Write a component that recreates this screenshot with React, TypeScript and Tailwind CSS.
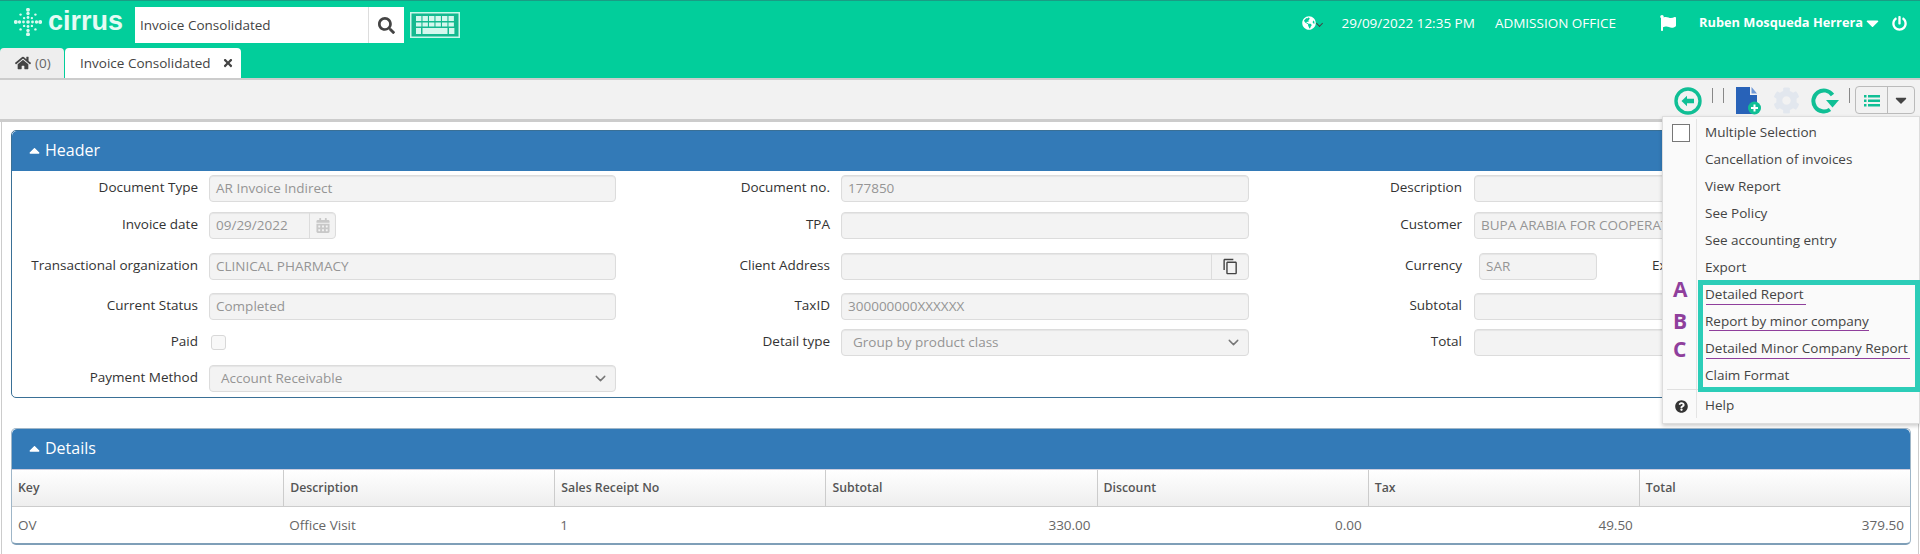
import React from 'react';
import {
  FaCalendarAlt, FaCaretDown, FaCaretUp, FaCog, FaFlag, FaGlobeAmericas, FaHome,
  FaPowerOff, FaQuestionCircle, FaSearch, FaTimes,
} from 'react-icons/fa';
import { LuChevronDown } from 'react-icons/lu';
import { MdContentCopy } from 'react-icons/md';

const inputBox = 'h-[27px] rounded-[4px] border border-[#dcdcdc] bg-[#f3f3f3] shadow-[inset_0_1px_1px_rgba(0,0,0,0.06)] text-[#959595] flex items-center';

function CirrusLogo() {
  const dots: { x: number; y: number; r: number }[] = [{ x: 14, y: 14, r: 1.8 }];
  for (let a = 0; a < 8; a++) {
    const angle = (a * Math.PI) / 4;
    const straight = a % 2 === 0;
    const radii = straight ? [4.5, 8.5, 12.2] : [5.5, 10.5];
    radii.forEach((rad, i) => {
      dots.push({
        x: 14 + rad * Math.sin(angle),
        y: 14 - rad * Math.cos(angle),
        r: straight ? 1.4 + i * 0.3 : 1.2,
      });
    });
  }
  return (
    <svg width="28" height="28" viewBox="0 0 28 28" className="shrink-0">
      {dots.map((d, i) => (
        <circle key={i} cx={d.x} cy={d.y} r={d.r} fill="#d9faf0" />
      ))}
    </svg>
  );
}

function KeyboardIcon() {
  const keys = [0, 1, 2, 3, 4, 5];
  return (
    <svg width="50" height="26" viewBox="0 0 50 26" className="ml-[6px]">
      <rect x="0.75" y="0.75" width="48.5" height="24.5" fill="#14b98f" stroke="#c9f7ea" strokeWidth="1.5" />
      {keys.map((k) => <rect key={`a${k}`} x={6 + k * 6.5} y="4" width="5.4" height="5" fill="#d4f8ee" />)}
      {keys.map((k) => <rect key={`b${k}`} x={6 + k * 6.5} y="10.5" width="5.4" height="4" fill="#d4f8ee" />)}
      <rect x="6" y="16" width="5" height="6" fill="#d4f8ee" />
      <rect x="12.5" y="16" width="25" height="6" fill="#d4f8ee" />
      <rect x="39" y="16" width="5.4" height="6" fill="#d4f8ee" />
    </svg>
  );
}

function BackIcon() {
  return (
    <svg width="28" height="28" viewBox="0 0 28 28">
      <circle cx="14" cy="14" r="12" fill="none" stroke="#10bf95" strokeWidth="3.4" />
      <path d="M7.5 14 L13 8.8 V11.8 H20 V16.2 H13 V19.2 Z" fill="#10bf95" />
    </svg>
  );
}

function NewDocIcon() {
  return (
    <svg width="26" height="28" viewBox="0 0 26 28">
      <path d="M0 0 H14 V8 H21 V27 H0 Z" fill="#2862b8" />
      <path d="M15.5 0 L21 6.5 H15.5 Z" fill="#6f98d6" />
      <circle cx="18.5" cy="21" r="6.5" fill="#10bf95" />
      <path d="M18.5 17.5 V24.5 M15 21 H22" stroke="#ffffff" strokeWidth="2" />
    </svg>
  );
}

function RefreshIcon() {
  return (
    <svg width="28" height="27" viewBox="0 0 28 27">
      <path d="M19 22.5 A10.5 10.5 0 1 1 21.5 8" fill="none" stroke="#10bf95" strokeWidth="4" />
      <path d="M15 13 H28 L21.5 20.5 Z" fill="#10bf95" />
    </svg>
  );
}

function ListIcon() {
  return (
    <svg width="16" height="13" viewBox="0 0 16 13">
      {[1, 5.5, 10].map((y) => (
        <g key={y} fill="#10bf95">
          <rect x="0" y={y} width="2.5" height="2.5" />
          <rect x="4" y={y} width="12" height="2.5" />
        </g>
      ))}
    </svg>
  );
}

function Field({ label, labelWidth, children }: { label: string; labelWidth: string; children: React.ReactNode }) {
  return (
    <div className="flex items-center h-[27px]">
      <span className={`${labelWidth} shrink-0 text-right text-[#333] whitespace-nowrap pb-[2px]`}>{label}</span>
      {children}
    </div>
  );
}

function TextInput({ value, className = '' }: { value?: string; className?: string }) {
  return (
    <div className={`${inputBox} px-[6px] overflow-hidden whitespace-nowrap ${className}`}>{value}</div>
  );
}

function SelectInput({ value, className = '' }: { value: string; className?: string }) {
  return (
    <div className={`${inputBox} pl-[11px] pr-[6px] justify-between ${className}`}>
      <span>{value}</span>
      <LuChevronDown className="w-[17px] h-[17px] text-[#777]" />
    </div>
  );
}

function PanelBar({ title }: { title: string }) {
  return (
    <div className="h-[40px] bg-[#337ab7] rounded-t-[5px] flex items-center pl-[17px] pb-[2px] text-white text-[16px]">
      <FaCaretUp className="w-[11px] h-[17px] mr-[5px]" />
      {title}
    </div>
  );
}

const menuItems = [
  'Cancellation of invoices',
  'View Report',
  'See Policy',
  'See accounting entry',
  'Export',
  'Detailed Report',
  'Report by minor company',
  'Detailed Minor Company Report',
  'Claim Format',
];

function ActionsMenu() {
  return (
    <div className="absolute left-[1662px] top-[116px] w-[258px] h-[308px] z-10 border border-[#ddd] bg-[#fafafa] shadow-[0_2px_4px_rgba(0,0,0,0.2)] pt-[2px] text-[#444]">
      <div className="flex h-[27px] items-center">
        <div className="w-[34px] h-full flex items-center justify-center border-r border-[#e4e4e4]">
          <div className="w-[18px] h-[18px] border border-[#777] bg-white ml-[2px]" />
        </div>
        <span className="pl-[8px]">Multiple Selection</span>
      </div>
      {menuItems.map((item) => (
        <div key={item} className="flex h-[27px] items-center">
          <div className="w-[34px] h-full border-r border-[#e4e4e4]" />
          <span className="pl-[8px] whitespace-nowrap">{item}</span>
        </div>
      ))}
      <div className="h-px ml-[4px] bg-[#e0e0e0]" />
      <div className="flex h-[28px] items-center">
        <div className="w-[34px] h-full flex items-center justify-center border-r border-[#e4e4e4]">
          <FaQuestionCircle className="w-[13px] h-[13px] text-[#333] mt-[4px] ml-[3px]" />
        </div>
        <span className="pl-[8px] mt-[2px]">Help</span>
      </div>

      {/* annotations drawn over the menu */}
      <div className="absolute left-[35px] top-[163px] w-[222px] h-[112px] border-[5px] border-[#2ccdb8]" />
      <span className="absolute left-[10px] top-[159px] text-[21px] leading-[27px] font-bold text-[#8f3f9c]">A</span>
      <span className="absolute left-[10px] top-[191px] text-[21px] leading-[27px] font-bold text-[#8f3f9c]">B</span>
      <span className="absolute left-[10px] top-[219px] text-[21px] leading-[27px] font-bold text-[#8f3f9c]">C</span>
      <div className="absolute left-[43px] top-[187px] w-[100px] h-px bg-[#8f3f9c]" />
      <div className="absolute left-[46px] top-[213px] w-[160px] h-px bg-[#8f3f9c]" />
      <div className="absolute left-[43px] top-[241px] w-[204px] h-px bg-[#8f3f9c]" />
    </div>
  );
}

const columns = ['Key', 'Description', 'Sales Receipt No', 'Subtotal', 'Discount', 'Tax', 'Total'];
const row: { text: string; right?: boolean }[] = [
  { text: 'OV' },
  { text: 'Office Visit' },
  { text: '1' },
  { text: '330.00', right: true },
  { text: '0.00', right: true },
  { text: '49.50', right: true },
  { text: '379.50', right: true },
];

export default function App() {
  return (
    <div className="relative w-[1920px] h-[554px] overflow-hidden bg-white text-[13.5px] font-['Open_Sans',sans-serif]">
      {/* Top bar */}
      <header className="h-[78px] bg-[#02ce9b] border-t border-[#1a9c84] flex flex-col">
        <div className="h-[47px] flex items-start text-white">
          <div className="flex items-center pl-[14px] pt-[7px]">
            <CirrusLogo />
            <span className="ml-[6px] text-[27px] leading-[28px] font-bold font-['Liberation_Sans',sans-serif] text-[#e4fbf4] -mt-[3px]">cirrus</span>
          </div>
          <div className="ml-[12px] mt-[6px] w-[269px] h-[36px] bg-white flex text-[#444]">
            <div className="flex-1 flex items-center pl-[5px]">Invoice Consolidated</div>
            <div className="w-[36px] border-l border-[#ddd] flex items-center justify-center">
              <FaSearch className="w-[17px] h-[17px] text-[#444]" />
            </div>
          </div>
          <div className="mt-[11px]"><KeyboardIcon /></div>
          <div className="ml-auto flex items-center h-[44px] pr-[13px]">
            <span className="relative mr-[26px]">
              <FaGlobeAmericas className="w-[14px] h-[14px]" />
              <span className="absolute left-[15px] top-[5px] w-[5px] h-[5px] border-b border-r border-[#444] rotate-45" />
            </span>
            <span className="mr-[20px]">29/09/2022 12:35 PM</span>
            <span className="mr-[43px]">ADMISSION OFFICE</span>
            <FaFlag className="w-[18px] h-[16px] mr-[22px]" />
            <span className="font-bold text-[12.8px]">Ruben Mosqueda Herrera</span>
            <FaCaretDown className="w-[13px] h-[20px] ml-[3px] mr-[13px]" />
            <FaPowerOff className="w-[15px] h-[15px]" />
          </div>
        </div>
        <div className="h-[30px] flex items-end text-[#444]">
          <div className="w-[64px] h-[30px] rounded-t-[4px] bg-[#eeeeee] flex items-center pl-[15px] gap-[4px]">
            <FaHome className="w-[16px] h-[16px] text-[#444]" />
            <span className="text-[#666]">(0)</span>
          </div>
          <div className="ml-px w-[176px] h-[30px] rounded-t-[4px] bg-white flex items-center pl-[15px]">
            <span>Invoice Consolidated</span>
            <FaTimes className="w-[12px] h-[12px] ml-[11px]" />
          </div>
        </div>
      </header>

      {/* Toolbar */}
      <div className="h-[44px] bg-[#f2f2f2] border-t-2 border-b-[3px] border-[#cccccc] flex items-start justify-end pr-[5px] pt-[6px]">
        <div className="mt-px"><BackIcon /></div>
        <div className="ml-[10px] mt-[2px] h-[15px] w-px bg-[#888]" />
        <div className="ml-[10px] mt-[2px] h-[15px] w-px bg-[#888]" />
        <div className="ml-[12px] mt-px"><NewDocIcon /></div>
        <FaCog className="ml-[11px] mt-px w-[27px] h-[27px] text-[#e2e7ee]" />
        <div className="ml-[11px] mt-px"><RefreshIcon /></div>
        <div className="ml-[10px] mt-[2px] h-[15px] w-px bg-[#888]" />
        <div className="ml-[5px] w-[60px] h-[28px] rounded-[4px] border border-[#bbb] flex">
          <div className="w-[32px] border-r border-[#bbb] flex items-center justify-center"><ListIcon /></div>
          <div className="flex-1 flex items-center justify-center"><FaCaretDown className="w-[12px] h-[18px] text-[#444]" /></div>
        </div>
      </div>

      {/* Content */}
      <main className="mx-px border-x border-[#cccccc] h-[432px] pl-[9px] pr-[7px] pt-[8px]">
        <section className="h-[268px] rounded-[5px] border border-[#3a7096] overflow-hidden">
          <PanelBar title="Header" />
          <div className="pt-[4px] grid grid-cols-[604px_633px_1fr]">
            <Field label="Document Type" labelWidth="w-[186px]">
              <TextInput value="AR Invoice Indirect" className="ml-[11px] w-[408px]" />
            </Field>
            <Field label="Document no." labelWidth="w-[214px]">
              <TextInput value="177850" className="ml-[11px] w-[408px]" />
            </Field>
            <Field label="Description" labelWidth="w-[213px]">
              <TextInput className="ml-[12px] w-[410px]" />
            </Field>

            <div className="mt-[10px]">
              <Field label="Invoice date" labelWidth="w-[186px]">
                <div className={`${inputBox} ml-[11px] w-[127px]`}>
                  <span className="flex-1 pl-[6px]">09/29/2022</span>
                  <span className="w-[26px] h-full border-l border-[#dcdcdc] flex items-center justify-center">
                    <FaCalendarAlt className="w-[14px] h-[15px] text-[#c8c8c8]" />
                  </span>
                </div>
              </Field>
            </div>
            <div className="mt-[10px]">
              <Field label="TPA" labelWidth="w-[214px]">
                <TextInput className="ml-[11px] w-[408px]" />
              </Field>
            </div>
            <div className="mt-[10px]">
              <Field label="Customer" labelWidth="w-[213px]">
                <TextInput value="BUPA ARABIA FOR COOPERAT" className="ml-[12px] w-[410px]" />
              </Field>
            </div>

            <div className="mt-[14px]">
              <Field label="Transactional organization" labelWidth="w-[186px]">
                <TextInput value="CLINICAL PHARMACY" className="ml-[11px] w-[408px]" />
              </Field>
            </div>
            <div className="mt-[14px]">
              <Field label="Client Address" labelWidth="w-[214px]">
                <div className={`${inputBox} ml-[11px] w-[408px] justify-end`}>
                  <span className="w-[37px] h-full border-l border-[#dcdcdc] flex items-center justify-center">
                    <MdContentCopy className="w-[17px] h-[17px] text-[#444]" />
                  </span>
                </div>
              </Field>
            </div>
            <div className="mt-[14px]">
              <Field label="Currency" labelWidth="w-[213px]">
                <TextInput value="SAR" className="ml-[17px] w-[118px]" />
                <span className="ml-[55px] text-[#333] whitespace-nowrap pb-[2px]">Ex</span>
              </Field>
            </div>

            <div className="mt-[13px]">
              <Field label="Current Status" labelWidth="w-[186px]">
                <TextInput value="Completed" className="ml-[11px] w-[408px]" />
              </Field>
            </div>
            <div className="mt-[13px]">
              <Field label="TaxID" labelWidth="w-[214px]">
                <TextInput value="300000000XXXXXX" className="ml-[11px] w-[408px]" />
              </Field>
            </div>
            <div className="mt-[13px]">
              <Field label="Subtotal" labelWidth="w-[213px]">
                <TextInput className="ml-[12px] w-[410px]" />
              </Field>
            </div>

            <div className="mt-[9px]">
              <Field label="Paid" labelWidth="w-[186px]">
                <div className="ml-[13px] w-[15px] h-[15px] rounded-[3px] border border-[#d8d8d8] bg-[#f8f8f8]" />
              </Field>
            </div>
            <div className="mt-[9px]">
              <Field label="Detail type" labelWidth="w-[214px]">
                <SelectInput value="Group by product class" className="ml-[11px] w-[408px]" />
              </Field>
            </div>
            <div className="mt-[9px]">
              <Field label="Total" labelWidth="w-[213px]">
                <TextInput className="ml-[12px] w-[410px]" />
              </Field>
            </div>

            <div className="mt-[9px]">
              <Field label="Payment Method" labelWidth="w-[186px]">
                <SelectInput value="Account Receivable" className="ml-[11px] w-[408px]" />
              </Field>
            </div>
          </div>
        </section>

        <section className="mt-[30px] h-[117px] rounded-[5px] border border-[#9fb6c8] border-b-2 border-b-[#7f9fb8] overflow-hidden">
          <PanelBar title="Details" />
          <div className="grid grid-cols-7 h-[38px] border-b border-[#ccc] border-t border-t-[#ccd] bg-gradient-to-b from-white to-[#eeeeee] font-semibold text-[12.3px] text-[#555]">
            {columns.map((c, i) => (
              <div key={c} className={`flex items-center pl-[6px] pt-px ${i > 0 ? 'border-l border-[#ccc]' : ''}`}>{c}</div>
            ))}
          </div>
          <div className="grid grid-cols-7 h-[36px] text-[#666]">
            {row.map((c, i) => (
              <div key={i} className={`flex items-center px-[6px] ${c.right ? 'justify-end' : ''}`}>{c.text}</div>
            ))}
          </div>
        </section>
      </main>

      <ActionsMenu />
    </div>
  );
}
